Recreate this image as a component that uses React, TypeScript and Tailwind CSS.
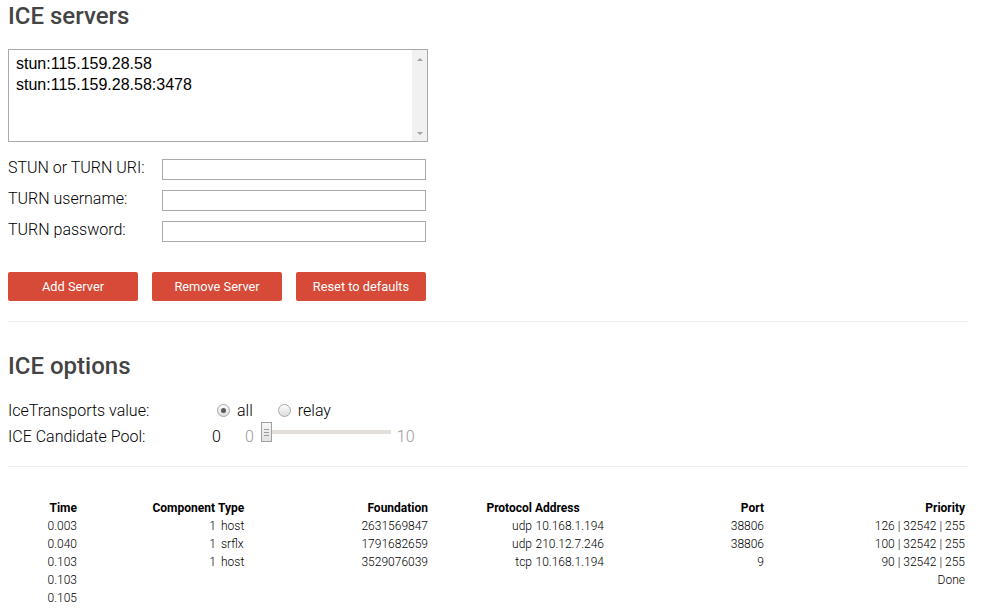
import React from "react";

const rows: string[][] = [
  ["0.003", "1", "host", "2631569847", "udp", "10.168.1.194", "38806", "126 | 32542 | 255"],
  ["0.040", "1", "srflx", "1791682659", "udp", "210.12.7.246", "38806", "100 | 32542 | 255"],
  ["0.103", "1", "host", "3529076039", "tcp", "10.168.1.194", "9", "90 | 32542 | 255"],
  ["0.103", "", "", "", "", "", "", "Done"],
  ["0.105", "", "", "", "", "", "", ""],
];

const headers = ["Time", "Component", "Type", "Foundation", "Protocol", "Address", "Port", "Priority"];

function Radio({ checked }: { checked?: boolean }) {
  return (
    <span className="mt-[2px] flex h-[13px] w-[13px] shrink-0 items-center justify-center rounded-full border border-[#a8a8a8] bg-gradient-to-b from-[#fdfdfd] to-[#dcdcdc]">
      {checked ? <span className="h-[5px] w-[5px] rounded-full bg-[#5a5a5a]" /> : null}
    </span>
  );
}

function headerClass(h: string) {
  if (h === "Address") return "text-left font-bold text-black";
  if (h === "Type") return "text-left font-bold text-black";
  return "pr-[3px] text-right font-bold text-black";
}

function cellClass(j: number) {
  if (j === 1) return "h-[18px] pr-[2px] text-right text-black";
  if (j === 2) return "h-[18px] pl-[3px] text-left text-black";
  return "h-[18px] pr-[3px] text-right text-black";
}

export default function App() {
  return (
    <div className="h-[613px] w-[997px] overflow-hidden bg-white">
      <div className="ml-2 w-[960px] font-['Roboto',sans-serif] font-light text-black">
        <h2 className="text-[24px] leading-[32px] font-medium text-[#444]">ICE servers</h2>

        <div className="mt-[17px] flex h-[93px] w-[420px] border border-[#a9a9a9]">
          <div className="flex-1 pl-[7px] pt-[3px] font-['Liberation_Sans',Arial,sans-serif] text-[16px] leading-[21px] font-normal text-black">
            <div>stun:115.159.28.58</div>
            <div>stun:115.159.28.58:3478</div>
          </div>
          <div className="flex w-[15px] flex-col items-center justify-between bg-[#f1f1f1] pt-[8px] pb-[6px]">
            <span className="h-0 w-0 border-x-[3px] border-b-[3px] border-x-transparent border-b-[#a3a3a3]" />
            <span className="h-0 w-0 border-x-[3px] border-t-[3px] border-x-transparent border-t-[#a3a3a3]" />
          </div>
        </div>

        <div className="mt-[17px] flex flex-col gap-[10px]">
          {["STUN or TURN URI:", "TURN username:", "TURN password:"].map((l) => (
            <div key={l} className="flex h-[21px] items-start">
              <span className="w-[154px] text-[16px] leading-[18px]">{l}</span>
              <span className="h-[21px] w-[264px] border border-[#a9a9a9] bg-white" />
            </div>
          ))}
        </div>

        <div className="mt-[30px] flex gap-[14px]">
          {["Add Server", "Remove Server", "Reset to defaults"].map((b) => (
            <button
              key={b}
              className="h-[29px] w-[130px] rounded-[2px] bg-[#d84a38] font-['Roboto',sans-serif] text-[12.8px] font-normal text-white"
            >
              {b}
            </button>
          ))}
        </div>

        <div className="mt-[20px] h-px w-[960px] bg-[#eeeeee]" />

        <h2 className="mt-[28px] text-[24px] leading-[32px] font-medium text-[#444]">ICE options</h2>

        <div className="mt-[20px] flex h-[20px] items-start text-[16px] leading-[18px]">
          <span className="w-[209px]">IceTransports value:</span>
          <Radio checked />
          <span className="ml-[7px]">all</span>
          <span className="ml-[25px]">
            <Radio />
          </span>
          <span className="ml-[7px]">relay</span>
        </div>

        <div className="flex h-[20px] items-start text-[16px] leading-[18px]">
          <span className="mt-[6px] w-[204px]">ICE Candidate Pool:</span>
          <span className="mt-[6px]">0</span>
          <span className="mt-[6px] ml-[24px] text-[#999]">0</span>
          <span className="ml-[7px] flex h-[20px] w-[11px] flex-col items-center justify-center gap-[2px] border border-[#a0a0a0] bg-gradient-to-b from-[#f6f6f6] to-[#e2e2e2]">
            <span className="h-px w-[5px] bg-[#9a9a9a]" />
            <span className="h-px w-[5px] bg-[#9a9a9a]" />
            <span className="h-px w-[5px] bg-[#9a9a9a]" />
          </span>
          <span className="mt-[8px] h-[4px] w-[119px] bg-[#e2dfdb]" />
          <span className="mt-[6px] ml-[6px] text-[#999]">10</span>
        </div>

        <div className="mt-[24px] h-px w-[960px] bg-[#eeeeee]" />

        <div className="mt-[32px] grid grid-cols-[72px_138px_32px_181px_104px_72px_160px_201px] text-[12px] leading-[18px]">
          {headers.map((h) => (
            <div key={h} className={headerClass(h)}>
              {h}
            </div>
          ))}
          {rows.map((r, i) =>
            r.map((c, j) => (
              <div key={`${i}-${j}`} className={cellClass(j)}>
                {c}
              </div>
            ))
          )}
        </div>
      </div>
    </div>
  );
}
